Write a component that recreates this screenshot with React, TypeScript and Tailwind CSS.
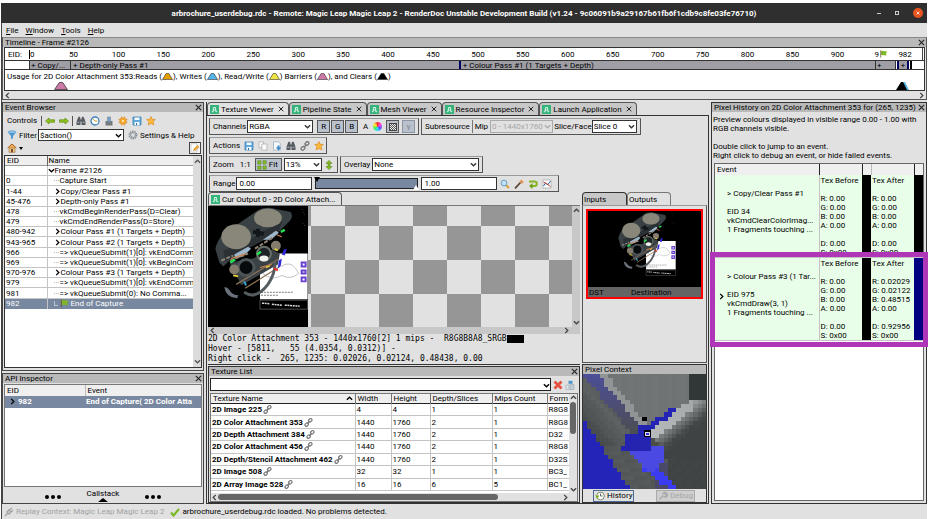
import type { ReactNode } from "react";

const ICONS: Record<string, ReactNode> = {
  left: <path d="M.5 5 4 2v1.800h5.500v2.400H4V8z" fill="#8fc31f" stroke="#5d8a10" strokeWidth=".7" />,
  right: <path d="M9.500 5 6 2v1.800H.5v2.400H6V8z" fill="#8fc31f" stroke="#5d8a10" strokeWidth=".7" />,
  find: (
    <g fill="#555b61">
      <path d="M1.500 3 2.500.8h1.500L4.500 3v6H.5V6zM8.500 3 7.500.8H6L5.500 3v6h4V6z" />
      <path d="M4 3.500h2v2H4z" />
      <path d="M1.400 6.300h2M6.600 6.300h2" stroke="#b9bec4" strokeWidth=".9" />
    </g>
  ),
  clock: (
    <g>
      <circle cx="5" cy="5" r="4" fill="#fff" stroke="#3e82bd" strokeWidth="1.300" />
      <path d="M5 5 2.800 2.800M5 5h2.300" stroke="#c99a2c" strokeWidth="1" />
    </g>
  ),
  lock: (
    <g>
      <path d="M1.500 5h7v4.500h-7z" fill="#74797e" />
      <path d="M3.500 1h3v5h-3z" fill="#6fa6d4" stroke="#7c8287" strokeWidth=".6" />
    </g>
  ),
  burst: (
    <g fill="#f4a62a" stroke="#d27b16" strokeWidth=".5">
      <path d="M3.500.8 5 2.200 6.500.8l.7 2 2 .7L7.800 5l1.400 1.500-2 .7-.7 2L5 7.800 3.500 9.200l-.7-2-2-.7L2.200 5 .8 3.500l2-.7z" />
      <circle cx="5" cy="5" r="1.200" fill="#fbe3a5" stroke="none" />
    </g>
  ),
  save: (
    <g>
      <path d="M1 1h8v8H1z" fill="#5fa9dd" stroke="#2c75ae" strokeWidth=".7" />
      <path d="M2.500 1.500h5v2.500h-5zM2.500 6h5v3h-5z" fill="#f4f8fb" />
      <path d="M4 7h1v2H4z" fill="#356e9b" />
    </g>
  ),
  star: (
    <path
      d="m5 .6 1.300 2.700 3 .2-2.200 2.100L7.900 9 5 7.400 2.100 9l.8-3.400L.7 3.500l3-.2z"
      fill="#fbb93c"
      stroke="#d98218"
      strokeWidth=".6"
    />
  ),
  funnel: (
    <g>
      <path d="M1 2.500 4 6v3.500L6 8V6l3-3.500z" fill="#4f97cf" />
      <ellipse cx="5" cy="2.200" rx="4" ry="1.400" fill="#8cc4ea" stroke="#3c81b8" strokeWidth=".5" />
    </g>
  ),
  gear: (
    <g>
      <circle cx="5" cy="5" r="3.700" fill="none" stroke="#8d9297" strokeWidth="1.600" strokeDasharray="1.500 .8" />
      <circle cx="5" cy="5" r="2.500" fill="#d9dbdd" stroke="#8a8f94" />
    </g>
  ),
  home: (
    <g>
      <path d="M.6 5 5 1l4.400 4" fill="#efb15a" stroke="#a85a1d" strokeWidth="1" />
      <path d="M2 5h6v4.300H2z" fill="#f0cf8f" stroke="#99632b" strokeWidth=".6" />
      <path d="M4 6h2v3.300H4z" fill="#7a4a24" />
    </g>
  ),
  edit: (
    <g>
      <path d="M1 .8h6V9H1z" fill="#fff" stroke="#b5b5b5" strokeWidth=".6" />
      <path d="m3.500 7.500.5-1.800L7.500 2.500 9 4 5.500 7.200z" fill="#f1b13b" stroke="#b77b1c" strokeWidth=".5" />
    </g>
  ),
  flag: (
    <g>
      <path d="M2 .8 9.500 2 8 5l1 2-7-.6z" fill="#7fb629" />
      <path d="M1.500.5v9" stroke="#6d5733" strokeWidth="1" />
    </g>
  ),
  link: (
    <g fill="none" stroke="#777" strokeWidth="1.300">
      <rect x="5" y="1" width="4" height="3" rx="1.300" transform="rotate(-45 7 2.500)" />
      <rect x="1" y="5.800" width="4" height="3" rx="1.300" transform="rotate(-45 3 7.300)" />
      <path d="m3.600 6.400 2.800-2.800" />
    </g>
  ),
  copy: (
    <g fill="#fafafa" stroke="#a4a8ac" strokeWidth=".7">
      <path d="M1 .8h4.500v6H1z" />
      <path d="M3.800 3H9v6.200H3.800z" />
    </g>
  ),
  goto: (
    <g>
      <path d="M1.500.8h5l1.800 2v6.400H1.500z" fill="#f7fafc" stroke="#8fa9bd" strokeWidth=".7" />
      <path d="M5.500 4.500h2v2h1.700L6.500 9.500l-2.700-3h1.700z" fill="#3a88c6" />
    </g>
  ),
  fit: (
    <g fill="#8dc229" stroke="#567f14" strokeWidth=".6">
      <path d="M.8.8h3.200v3.200H.8zM6 .8h3.200v3.200H6zM.8 6h3.200v3.200H.8zM6 6h3.200v3.200H6z" />
    </g>
  ),
  updown: <path d="m5 .4 3 3H6v3.200h2l-3 3-3-3h2V3.400H2z" fill="#84bb25" stroke="#568312" strokeWidth=".6" />,
  zoomIn: (
    <g>
      <path d="m6 6 3 3" stroke="#d99b33" strokeWidth="1.800" />
      <circle cx="4" cy="4" r="2.900" fill="#bfe0f5" stroke="#6ba0c4" />
    </g>
  ),
  wand: (
    <g>
      <path d="M1 9.300 6.500 3.500" stroke="#5b4634" strokeWidth="1.800" />
      <path d="m5.500 2.500 2-2 1 1.500 1.500.8-2 2z" fill="#e88f4c" />
    </g>
  ),
  back: (
    <g>
      <path d="M1 2.500h5.500a2.200 2.200 0 0 1 0 4.500H4" fill="none" stroke="#86b51f" strokeWidth="2" />
      <path d="M4.500 4v6L1 7z" fill="#6f9d14" />
    </g>
  ),
  chart: (
    <g>
      <path d="M1 1h8v8H1z" fill="#fff" stroke="#999" strokeWidth=".6" />
      <path d="m1.500 7 2-3 2 2 3-4" fill="none" stroke="#2b62a8" />
      <path d="m1.500 3 3 1.500 4 3" fill="none" stroke="#cc3c2e" />
    </g>
  ),
  cross: <path d="m1.500 1.500 7 7m0-7-7 7" stroke="#e5513f" strokeWidth="2.800" />,
  bin: (
    <g>
      <path d="M1 5h3v4.500H1z" fill="#dfe6eb" stroke="#98a5af" strokeWidth=".6" />
      <path d="M3.500.8h4v3h-4z" fill="#4d92c8" />
      <path d="M5 4.500h4v5H5z" fill="#c3ccd3" stroke="#98a5af" strokeWidth=".6" />
    </g>
  ),
  check: <path d="m1 5.500 2.500 3L9 2" fill="none" stroke="#7bb928" strokeWidth="2.200" />,
  plug: <path d="M1 9 3.500 6.500M3 5l2-2 2 2-2 2zM5 3l3-2M7 5l2-2" fill="none" stroke="#a2a2a2" strokeWidth="1.300" />,
  wrench: <path d="m1.500 8.500 4-4M5 3.500a2 2 0 0 1 3-2L7 3l1 1 1.300-1a2 2 0 0 1-3.300 2.200" fill="none" stroke="#a9a9a9" strokeWidth="1.400" />,
  history: (
    <g>
      <circle cx="5.500" cy="5" r="3.800" fill="#fff" stroke="#7d8b6a" />
      <path d="M5.500 2.500V5h2" fill="none" stroke="#444" strokeWidth=".8" />
      <path d="M.3 4.500h4L2.300 8z" fill="#79ae21" />
    </g>
  ),
  logo: (
    <g>
      <path d="M0 0h10v10H0z" fill="#36b37b" />
      <path d="M2 7.500h1.500V5M8 7.500H6.500V5M3.500 5.500h3M3.800 5V2.800h2.400V5" fill="none" stroke="#e9fff4" strokeWidth="1" />
    </g>
  ),
};

function Icon({ name, className = "size-2.5" }: { name: string; className?: string }) {
  return (
    <svg viewBox="0 0 10 10" aria-hidden="true" className={`shrink-0 ${className}`}>
      {ICONS[name]}
    </svg>
  );
}

function Chevron({ dir, className = "" }: { dir: "up" | "down" | "left" | "right"; className?: string }) {
  const d = {
    up: "M1 5.500 4 2.500l3 3",
    down: "m1 2.500 3 3 3-3",
    left: "M5.500 1 2.500 4l3 3",
    right: "m2.500 1 3 3-3 3",
  }[dir];
  return (
    <svg viewBox="0 0 8 8" aria-hidden="true" className={`size-[7px] shrink-0 ${className}`}>
      <path d={d} fill="none" stroke="currentColor" strokeWidth="1.500" />
    </svg>
  );
}

function Close() {
  return (
    <button type="button" aria-label="Close" className="flex size-2 shrink-0 items-center justify-center">
      <svg viewBox="0 0 8 8" className="size-[7px]">
        <path d="m1 1 6 6m0-6L1 7" stroke="#222" strokeWidth="1.300" />
      </svg>
    </button>
  );
}

function PanelTitle({ children, closable = true }: { children: ReactNode; closable?: boolean }) {
  return (
    <div className="flex h-[9px] shrink-0 items-center justify-between whitespace-nowrap bg-[#b9b9b9] pr-px pl-0.5">
      <h2>{children}</h2>
      {closable && <Close />}
    </div>
  );
}

function Select({
  label,
  value,
  className = "",
  disabled = false,
}: {
  label: string;
  value: string;
  className?: string;
  disabled?: boolean;
}) {
  return (
    <div className={`relative flex ${className}`}>
      <select
        aria-label={label}
        disabled={disabled}
        className={`h-[13px] w-full appearance-none border pr-2 pl-px ${
          disabled ? "border-[#aaa] bg-[#e1e1e1] text-[#a5a5a5]" : "border-[#333] bg-white text-black"
        }`}
      >
        <option>{value}</option>
      </select>
      <Chevron dir="down" className={`absolute top-[3px] right-0.5 ${disabled ? "text-[#aaa]" : "text-[#333]"}`} />
    </div>
  );
}

function Toolbar({ label, children, className = "" }: { label: string; children: ReactNode; className?: string }) {
  return (
    <div
      role="toolbar"
      aria-label={label}
      className={`flex h-[17px] items-center border border-[#555] border-t-[#999] px-[3px] ${className}`}
    >
      {children}
    </div>
  );
}

function IconButton({ name, label, className = "" }: { name: string; label: string; className?: string }) {
  return (
    <button type="button" aria-label={label} className={`flex shrink-0 items-center ${className}`}>
      <Icon name={name} />
    </button>
  );
}

function Triangle({ fill, className = "h-[7px] w-[11px]" }: { fill: string; className?: string }) {
  return (
    <svg viewBox="0 0 12 8" aria-hidden="true" preserveAspectRatio="none" className={`inline-block ${className}`}>
      <path d="M4.500 .5h3L11.500 7.500H.5z" fill={fill} stroke="#333" strokeWidth=".7" />
    </svg>
  );
}

const TICKS = Array.from({ length: 18 }, (_, i) => (i + 1) * 50);

function Timeline() {
  return (
    <section aria-label="Timeline" className="flex flex-col border border-[#555] border-t-[#888]">
      <PanelTitle>Timeline - Frame #2126</PanelTitle>
      <div className="mx-px border border-[#333] bg-white">
        <div className="flex h-3 items-center">
          <span className="w-6 pl-[3px]">EID:</span>
          <span className="w-[22px] border-l border-black">0</span>
          {TICKS.map((t) => (
            <span key={t} className="flex-1 text-center">
              {t}
            </span>
          ))}
          <span className="flex w-[28px] items-center justify-end">
            9<Icon name="flag" className="h-2 w-[9px]" />
          </span>
          <span className="mr-2.5 w-6 text-right">982</span>
          <span className="h-full w-0.5 border-l border-[#444]" />
        </div>
        <div className="flex h-2.5 items-center whitespace-nowrap border-y border-[#333]">
          <span className="w-6" />
          <span className="flex h-full w-[41px] items-center border-l border-[#333] bg-[#9f9ea5] pl-px">+ Copy/...</span>
          <span className="flex h-full flex-[390] items-center border-l border-[#333] bg-[#9f9ea5] pl-0.5">
            + Depth-only Pass #1
          </span>
          <span className="flex h-full flex-[417] items-center border-l-2 border-[#000060] bg-[#9f9ea5] pl-0.5">
            + Colour Pass #1 (1 Targets + Depth)
          </span>
          <span className="flex h-full w-[21px] items-center border-x border-[#333] bg-[#9f9ea5] pl-px">+</span>
          <span className="ml-px flex h-full w-3 items-center justify-center border-x-2 border-[#000060] bg-[#9f9ea5]">+</span>
          <span className="ml-px mr-3 h-full w-0.5 bg-black" />
        </div>
        <div className="flex h-3 items-center whitespace-nowrap pl-0.5">
          Usage for 2D Color Attachment 353:Reads (<Triangle fill="#e69f00" />
          ), Writes (<Triangle fill="#56b4e9" />
          ), Read/Write (<Triangle fill="#f0e442" />
          <span className="whitespace-pre">{") Barriers ("}</span>
          <Triangle fill="#cc79a7" />
          ), and Clears (<Triangle fill="#000" />)
        </div>
        <div className="flex h-2 items-start justify-between pr-3.5 pl-[49px]">
          <Triangle fill="#cc79a7" className="h-2 w-3.5" />
          <svg viewBox="0 0 14 8" className="h-2 w-3.5" aria-hidden="true">
            <path d="M6 0h3l4 8H6z" fill="#56b4e9" />
            <path d="M5 0h2l4 8H0z" />
          </svg>
        </div>
      </div>
      <div className="flex h-2 items-center justify-between px-px text-[#444]">
        <Chevron dir="left" />
        <Chevron dir="right" />
      </div>
    </section>
  );
}

type EventRow = { eid: string; name: string; kind?: "root" | "branch" | "end" };

const EVENTS: EventRow[] = [
  { eid: "", name: "Frame #2126", kind: "root" },
  { eid: "0", name: "Capture Start" },
  { eid: "1-44", name: "Copy/Clear Pass #1", kind: "branch" },
  { eid: "45-476", name: "Depth-only Pass #1", kind: "branch" },
  { eid: "478", name: "vkCmdBeginRenderPass(D=Clear)" },
  { eid: "479", name: "vkCmdEndRenderPass(D=Store)" },
  { eid: "480-942", name: "Colour Pass #1 (1 Targets + Depth)", kind: "branch" },
  { eid: "943-965", name: "Colour Pass #2 (1 Targets + Depth)", kind: "branch" },
  { eid: "966", name: "=> vkQueueSubmit(1)[0]: vkEndComm" },
  { eid: "969", name: "=> vkQueueSubmit(1)[0]: vkBeginCom" },
  { eid: "970-976", name: "Colour Pass #3 (1 Targets + Depth)", kind: "branch" },
  { eid: "979", name: "=> vkQueueSubmit(1)[0]: vkEndComm" },
  { eid: "981", name: "=> vkQueueSubmit(0): No Comma..." },
  { eid: "982", name: "End of Capture", kind: "end" },
];

function EventBrowser() {
  return (
    <section aria-label="Event Browser" className="flex flex-[268] flex-col border border-[#444]">
      <PanelTitle>Event Browser</PanelTitle>
      <div className="flex h-[17px] items-center pl-1">
        <span>Controls</span>
        <div className="ml-1 flex items-center gap-1 border-x border-[#555] px-[3px]">
          <IconButton name="left" label="Previous event" />
          <IconButton name="right" label="Next event" />
        </div>
        <div className="ml-[3px] flex items-center gap-1">
          <IconButton name="find" label="Find" />
          <IconButton name="clock" label="Time durations" />
          <IconButton name="lock" label="Select columns" />
          <IconButton name="burst" label="Statistics" />
          <IconButton name="save" label="Export" />
          <IconButton name="star" label="Bookmark" />
        </div>
      </div>
      <div className="flex h-3 items-center pl-1 whitespace-nowrap">
        <Icon name="funnel" />
        <label htmlFor="filter" className="ml-0.5">
          Filter
        </label>
        <div className="relative ml-px flex">
          <input id="filter" defaultValue="$action()" className="h-3 w-[86px] border border-[#333] bg-white pl-px" />
          <Chevron dir="down" className="absolute top-[3px] right-0.5" />
        </div>
        <button type="button" className="ml-1 flex items-center gap-0.5">
          <Icon name="gear" />
          Settings &amp; Help
        </button>
      </div>
      <div className="flex h-3.5 items-center pl-1">
        <IconButton name="home" label="Home" />
        <span className="ml-0.5 border-x-2 border-t-[3px] border-x-transparent border-t-black" />
        <button type="button" aria-label="Edit" className="mr-0.5 ml-auto flex size-3 items-center justify-center border border-[#444] bg-[#f4f4f4]">
          <Icon name="edit" />
        </button>
      </div>
      <div className="mx-px mb-0.5 flex flex-1 border border-[#333] bg-white">
        <div className="min-w-0 flex-1">
          <table className="h-[153px] w-full table-fixed border-collapse whitespace-nowrap text-left">
            <thead>
              <tr className="border-b border-[#999] bg-[#efefef]">
                <th className="w-[42px] border-r border-[#666] p-0 pl-0.5 font-normal">EID</th>
                <th className="p-0 pl-px font-normal">Name</th>
              </tr>
            </thead>
            <tbody>
              {EVENTS.map((e) => (
                <tr
                  key={e.eid + e.name}
                  className={`border-b ${e.kind === "end" ? "border-[#7888a0] bg-[#7888a0] text-white" : "border-[#c4c4c4]"}`}
                >
                  <td className="border-r border-[#c4c4c4] p-0 pl-px">{e.eid}</td>
                  <td className="overflow-hidden p-0">
                    <div className={`flex items-center ${e.kind === "root" ? "" : "pl-1.5"}`}>
                      {e.kind === "root" && <Chevron dir="down" />}
                      {e.kind === "branch" && <Chevron dir="right" />}
                      {e.kind === "end" && (
                        <>
                          <span className="mr-0.5 h-[5px] w-1 shrink-0 border-b border-l border-[#b9c2cf]" />
                          <Icon name="flag" className="mr-0.5 size-[9px]" />
                        </>
                      )}
                      {!e.kind && <span className="mr-px w-[5px] shrink-0 border-t border-dotted border-[#bbb]" />}
                      <span>{e.name}</span>
                    </div>
                  </td>
                </tr>
              ))}
            </tbody>
          </table>
        </div>
        <div className="flex w-2 flex-col items-center justify-between bg-[#dcdcdc] py-0.5 text-[#555]">
          <Chevron dir="up" />
          <Chevron dir="down" />
        </div>
      </div>
    </section>
  );
}

function ApiInspector() {
  return (
    <section aria-label="API Inspector" className="flex flex-[130] flex-col border border-[#444]">
      <PanelTitle>API Inspector</PanelTitle>
      <div className="mx-px mt-px flex-1 border border-[#777] bg-white">
        <table className="w-full table-fixed whitespace-nowrap text-left">
          <thead className="bg-[#efefef]">
            <tr className="h-[11px]">
              <th className="w-20 border-r border-[#bbb] p-0 pl-0.5 font-normal">EID</th>
              <th className="p-0 pl-0.5 font-normal">Event</th>
            </tr>
          </thead>
          <tbody>
            <tr className="h-3 bg-[#7888a0] font-bold text-white">
              <td className="p-0">
                <div className="flex items-center gap-0.5 pl-1">
                  <Chevron dir="right" className="text-black" />
                  982
                </div>
              </td>
              <td className="overflow-hidden p-0 pl-px">End of Capture( 2D Color Atta</td>
            </tr>
          </tbody>
        </table>
      </div>
      <div className="flex h-4 shrink-0 items-center justify-center gap-[26px]">
        <span className="flex gap-0.5 pt-1">
          {[0, 1, 2].map((i) => (
            <span key={i} className="size-1 rounded-full bg-black" />
          ))}
        </span>
        <button type="button" className="flex flex-col items-center leading-[9px]">
          Callstack
          <span className="border-x-[5px] border-b-4 border-x-transparent border-b-black" />
        </button>
        <span className="flex gap-0.5 pt-1">
          {[0, 1, 2].map((i) => (
            <span key={i} className="size-1 rounded-full bg-black" />
          ))}
        </span>
      </div>
    </section>
  );
}

function Headset() {
  return (
    <g>
      <path d="M52 48h48v46H52z" fill="#fff" />
      <path d="M52 95h48v9H52z" fill="#000" stroke="#999" strokeWidth=".5" />
      <path d="m54 98 8 .5M64 99l10 1M77 100l15 1" stroke="#ddd" strokeWidth="1.500" strokeDasharray="2 .7" />
      <path d="M53 87h33M53 90h17" stroke="#555" strokeWidth=".8" strokeDasharray="2 1" />
      <path d="M55 68q8-14 18-7 9-6 15 2l3 5q-8 7-17 2-10 6-19-2z" fill="none" stroke="#999" strokeWidth=".6" />
      <path d="M93 56h6v6h-6zM93 64h6v5h-6zM93 71h6v6h-6z" fill="#6a3fd0" />
      <path d="M95 58h2v2h-2zM95 66h2v1h-2zM95 73h2v2h-2z" fill="#fff" />
      <path d="M94 3l3 6M95 17l3 4" stroke="#444" strokeWidth="1" strokeDasharray="1 2" />
      <path d="M16 82q3-1 6 4 3 4 8 4l-1 3q-11 0-13-11z" fill="#6b727c" />
      <path d="M7 43Q9 35 14 29L46 7Q55-1 68 3L83 6q3 5-1 9L70 27 30 48q-8 6-15 13l-4-4z" fill="#3a4145" />
      <path d="m15 45 30-13 30-18-4 11-41 24-13 7z" fill="#2a3034" />
      <path d="m26 49 14-8 3 2-8 8-8 2zM55 34l13-9 3 2-8 7z" fill="#9eb6ca" />
      <path d="m13 55 12-5M22 55l18-7M47 43l19-12" stroke="#8b8479" strokeWidth="2" strokeDasharray="4 1.500" />
      <ellipse cx="28" cy="31" rx="15" ry="12.500" fill="#88877a" />
      <ellipse cx="60" cy="12" rx="14" ry="9.500" fill="#88877a" />
      <path d="M45 26l11 2M50 23v8" stroke="#11171a" strokeWidth="4" />
      <path d="M22 57q0 9 7 14l4 9 37-21 2-11-8-4-19 9z" fill="#3a4246" />
      <path d="m28 79 42-25M37 83 72 61" stroke="#8f7357" strokeWidth="1.300" />
      <path d="M36 87q12 8 24-8 8-12 7-23" fill="none" stroke="#555c60" strokeWidth="3" />
      <circle cx="38" cy="62" r="8" fill="#080b0d" stroke="#4c5458" strokeWidth="3" />
      <circle cx="56" cy="48" r="7" fill="#1d2326" stroke="#697069" strokeWidth="2" />
      <ellipse cx="56" cy="53" rx="4.500" ry="3" fill="#f3f3ee" />
      <circle cx="26" cy="64" r="5" fill="#847b6c" />
      <circle cx="68" cy="40" r="5" fill="#847b6c" />
      <path d="m70 63 1-8 3-2-1 7zM74 49l2-5 3-1-2 7z" fill="#3028dc" />
      <path d="m22 57 5-3M73 26l4-2M49 49l4-3" stroke="#25e052" strokeWidth="2.500" />
      <path d="m25 70 5 1M67 43l3 2M58 62l4-2" stroke="#e5d33a" strokeWidth="1.800" />
      <path d="m52 62 12-3M23 53l15-5M69 29l5 2" stroke="#cf8550" strokeWidth="1.200" />
      <path d="m66 63 4 2" stroke="#ef2d2d" strokeWidth="2" />
      <path d="m36 76 2 4" stroke="#39a6cf" strokeWidth="2" />
    </g>
  );
}

/* Colour of one magnified texel in the pixel context view. */
function texel(c: number, r: number): string {
  const grey = (v: number, b = 0) => `rgb(${Math.round(v)},${Math.round(v + 3)},${Math.round(v + 4 + b)})`;
  const ridge = 4.2 + r * 0.83;
  const white = 27 - (r - 5) * 1.28;
  if (c === 14 && r === 10) return "#000";
  if (c < (r - 10.5) * 0.66) return "#2424b9";
  if (r < 15 && r > 7 && c >= white - 3.600 && c < white - 1.500 && c < 22) return "#2323b4";
  if (r >= 12 && r <= 17 && c >= 22.500 - r * 0.8 && c <= 15 && c > 8.500) return "#2424b0";
  if (r >= 14 && r <= 17 && c >= 10 && c <= 14) return "#2424b0";
  if (r >= 17 && r <= 22 && c >= 9 + (r - 17) * 1.2 && c <= 18 - Math.max(0, r - 20)) return "#4a4ae2";
  if (r > 21 && c >= 14 + (r - 22) * 1.3 && c <= 17 + (r - 22) * 1.1) return "#3b3bf2";
  if (r < 13 && Math.abs(c - ridge) < 1) return grey(145);
  if (c > ridge && c < white - 1.500 && r < 14) return c > 24 && r < 6 ? "#303736" : grey(112 + (c % 3));
  if (c < ridge && r < 17) {
    const d = ridge - c;
    if (d < 4.500) return `rgb(76,78,${Math.round(150 - r * 5)})`;
    return grey(92 - Math.abs(6 - d) * 3 + ((c * 7 + r * 3) % 5));
  }
  if (r < 20 && c > 14) {
    if (c > 24 && r < 6) return "#303736";
    const d = c - white;
    if (d < 2 && c < 26) return grey(185 - c + r);
    if (d < 7) return grey(155 - d * 13);
    return grey(Math.max(64, 98 - d * 4));
  }
  if (c < 20 && c > 16 && r > 20) return "#4a4a68";
  return c < 20 ? grey(82 + ((c + r * 3) % 7)) : grey(64 + ((c + r) % 3));
}

function PixelGrid() {
  const cells: ReactNode[] = [];
  for (let r = 0; r < 27; r++) {
    for (let c = 0; c < 29; c++) {
      cells.push(<rect key={`${c}-${r}`} x={c} y={r} width="1.050" height="1.050" fill={texel(c, r)} />);
    }
  }
  return (
    <svg viewBox="0 0 29 27" preserveAspectRatio="none" shapeRendering="crispEdges" className="h-[112px] w-full flex-1">
      {cells}
      <rect x="14.600" y="13.400" width="1.200" height="1.300" fill="#3030d0" stroke="#000" strokeWidth=".3" />
      <rect x="14.800" y="13.700" width=".8" height=".8" fill="none" stroke="#fff" strokeWidth=".2" />
    </svg>
  );
}

const TABS = ["Texture Viewer", "Pipeline State", "Mesh Viewer", "Resource Inspector", "Launch Application"];

function Tab({ children, active = false, closable = true }: { children: ReactNode; active?: boolean; closable?: boolean }) {
  return (
    <button
      type="button"
      role="tab"
      aria-selected={active}
      className={`flex h-[13px] items-center gap-0.5 rounded-t border border-b-0 border-[#555] px-0.5 whitespace-nowrap ${
        active ? "bg-[#e1e1e1]" : "bg-[#c8c8c8]"
      }`}
    >
      <Icon name="logo" className="size-[9px]" />
      {children}
      {closable && (
        <svg viewBox="0 0 8 8" className="mx-0.5 size-1.5" aria-hidden="true">
          <path d="m1 1 6 6m0-6L1 7" stroke="#222" strokeWidth="1.300" />
        </svg>
      )}
    </button>
  );
}

function Toolbars() {
  const toggle = "h-[13px] w-[13px] border border-[#555] bg-[#b9c1cd]";
  return (
    <div className="flex flex-col gap-0.5 px-0.5 pt-0.5 whitespace-nowrap">
      <div className="flex gap-0.5">
        <Toolbar label="Channels" className="w-[210px]">
          <span>Channels</span>
          <Select label="Channels" value="RGBA" className="ml-px w-[66px]" />
          <div className="ml-1 flex gap-px">
            <button type="button" className={toggle}>R</button>
            <button type="button" className={toggle}>G</button>
            <button type="button" className={toggle}>B</button>
            <button type="button" className="h-[13px] w-[13px]">A</button>
          </div>
          <span className="ml-px size-[9px] rounded-full bg-[conic-gradient(#f33,#f4e,#55f,#3df,#4e5,#fe3,#f33)]" />
          <button type="button" aria-label="Checkerboard" className="ml-1 flex h-[13px] w-[13px] items-center justify-center border border-[#555] bg-[#b9c1cd]">
            <span className="size-2 border border-[#444] bg-[repeating-conic-gradient(#555_0_25%,#eee_0_50%)] bg-[length:2px_2px]" />
          </button>
          <button type="button" className="ml-auto h-[13px] w-[13px] border border-[#8b95a5] bg-[#b9c1cd] text-[#7d8794]">γ</button>
        </Toolbar>
        <Toolbar label="Subresource" className="w-[220px]">
          <span>Subresource</span>
          <span className="mx-0.5 h-[13px] w-px bg-[#777]" />
          <span>Mip</span>
          <Select label="Mip" value="0 - 1440x1760" className="ml-0.5 w-16" disabled />
          <span className="ml-px">Slice/Face</span>
          <Select label="Slice/Face" value="Slice 0" className="ml-auto w-[46px]" />
        </Toolbar>
      </div>
      <Toolbar label="Actions" className="w-[118px]">
        <span>Actions</span>
        <div className="ml-1 flex gap-1">
          <IconButton name="save" label="Save texture" />
          <IconButton name="copy" label="Copy" />
          <IconButton name="goto" label="Go to" />
          <IconButton name="find" label="Find" />
          <IconButton name="link" label="Link" />
          <IconButton name="star" label="Bookmark" />
        </div>
      </Toolbar>
      <div className="flex gap-0.5">
        <Toolbar label="Zoom" className="w-[129px]">
          <span>Zoom</span>
          <button type="button" className="ml-1.5">1:1</button>
          <button type="button" className="ml-1 flex h-[13px] w-[27px] items-center gap-0.5 border border-[#555] bg-[#b9c1cd] px-px">
            <Icon name="fit" />
            Fit
          </button>
          <Select label="Zoom" value="13%" className="ml-0.5 w-[38px]" />
          <IconButton name="updown" label="Flip" className="ml-0.5" />
        </Toolbar>
        <Toolbar label="Overlay" className="w-[143px]">
          <span>Overlay</span>
          <Select label="Overlay" value="None" className="ml-0.5 flex-1" />
        </Toolbar>
      </div>
      <Toolbar label="Range" className="w-[350px]">
        <label htmlFor="range-min">Range</label>
        <input id="range-min" defaultValue="0.00" className="ml-px h-[13px] w-[76px] border border-[#333] bg-white pl-0.5" />
        <div className="relative ml-[3px] h-[11px] w-[103px] border border-[#222] bg-[#7888a0]">
          <span className="absolute -top-0.5 -left-0.5 border-x-[3px] border-t-[5px] border-x-transparent border-t-black" />
          <span className="absolute -right-0.5 -bottom-0.5 border-x-[3px] border-b-[5px] border-x-transparent border-b-white" />
        </div>
        <input aria-label="Range maximum" defaultValue="1.00" className="ml-[3px] h-[13px] w-[76px] border border-[#333] bg-white pl-0.5" />
        <div className="ml-[3px] flex gap-1">
          <IconButton name="zoomIn" label="Zoom in" />
          <IconButton name="wand" label="Autofit" />
          <IconButton name="back" label="Reset" />
          <IconButton name="chart" label="Histogram" />
        </div>
      </Toolbar>
    </div>
  );
}

const TEXTURES = [
  ["2D Image 225", "4", "4", "1", "1", "R8G8"],
  ["2D Color Attachment 353", "1440", "1760", "2", "1", "R8G8"],
  ["2D Depth Attachment 384", "1440", "1760", "2", "1", "D32"],
  ["2D Color Attachment 456", "1440", "1760", "2", "1", "R8G8"],
  ["2D Depth/Stencil Attachment 462", "1440", "1760", "2", "1", "D32S"],
  ["2D Image 508", "32", "32", "1", "1", "BC3_"],
  ["2D Array Image 528", "16", "16", "6", "5", "BC1_"],
];

function TextureList() {
  const th = "border-r border-[#777] p-0 pl-0.5 font-normal";
  return (
    <section aria-label="Texture List" className="flex flex-1 flex-col border border-[#333]">
      <PanelTitle>Texture List</PanelTitle>
      <div className="flex items-center gap-0.5 py-0.5 pr-1 pl-px">
        <div className="relative flex flex-1">
          <input aria-label="Filter textures" className="h-[13px] w-full border border-[#222] bg-white" />
          <Chevron dir="down" className="absolute top-1 right-px" />
        </div>
        <IconButton name="cross" label="Clear" />
        <IconButton name="bin" label="Delete" />
      </div>
      <div className="mx-px flex flex-1 flex-col border border-[#777] bg-white">
        <div className="flex flex-1">
          <table className="h-[97px] w-full flex-1 table-fixed border-collapse self-start whitespace-nowrap text-left">
            <thead>
              <tr className="border-b border-[#222] bg-[#efefef]">
                <th className={th}>
                  <div className="flex items-center justify-between pr-0.5">
                    Texture Name
                    <Chevron dir="up" />
                  </div>
                </th>
                <th className={`w-9 ${th}`}>Width</th>
                <th className={`w-[39px] ${th}`}>Height</th>
                <th className={`w-[62px] ${th}`}>Depth/Slices</th>
                <th className={`w-[55px] ${th}`}>Mips Count</th>
                <th className="w-[22px] overflow-hidden p-0 pl-0.5 font-normal">Form</th>
              </tr>
            </thead>
            <tbody>
              {TEXTURES.map((t) => (
                <tr key={t[0]} className="border-b border-[#c4c4c4]">
                  {t.map((v, i) => (
                    <td key={i} className="overflow-hidden border-r border-[#c4c4c4] p-0 pl-px last:border-r-0">
                      {i === 0 ? (
                        <span className="flex items-center gap-px font-bold">
                          {v}
                          <Icon name="link" className="size-[9px]" />
                        </span>
                      ) : (
                        v
                      )}
                    </td>
                  ))}
                </tr>
              ))}
            </tbody>
          </table>
          <div className="flex w-2 flex-col items-center bg-[#e1e1e1] text-[#444]">
            <Chevron dir="up" />
            <span className="my-px h-8 w-1.5 rounded-sm bg-[#666]" />
            <Chevron dir="down" className="mt-auto" />
          </div>
        </div>
        <div className="flex h-2 items-center bg-[#e1e1e1] pr-2 text-[#444]">
          <Chevron dir="left" />
          <span className="h-1.5 w-[280px] rounded-sm bg-[#666]" />
          <Chevron dir="right" className="ml-auto" />
        </div>
      </div>
    </section>
  );
}

function TextureView() {
  return (
    <section aria-label="Current output" className="flex flex-col border-b border-[#333]">
      <div className="flex" role="tablist">
        <Tab active closable={false}>
          <span className="pr-1">Cur Output 0 - 2D Color Attach...</span>
        </Tab>
      </div>
      <div className="flex h-[122px] border-t border-[#777]">
        <svg viewBox="0 0 100 122" className="h-full w-[100px] shrink-0 bg-black" role="img" aria-label="Colour attachment preview">
          <Headset />
        </svg>
        <div className="flex-1 bg-[repeating-conic-gradient(#e1e1e1_0_25%,#969696_0_50%)] bg-[length:68px_68px] bg-[position:37px_-14px]" />
        <div className="flex w-2 flex-col items-center justify-between bg-[#c8c8c8] py-px text-[#444]">
          <Chevron dir="up" />
          <Chevron dir="down" />
        </div>
      </div>
      <div className="flex h-[7px] items-center justify-between bg-[#c8c8c8] pr-2.5 pl-px text-[#444]">
        <Chevron dir="left" />
        <Chevron dir="right" />
      </div>
      <div className="font-['DejaVu_Sans_Mono',monospace] leading-[10px] whitespace-pre">
        <p className="flex items-center">
          {"2D Color Attachment 353 - 1440x1760[2] 1 mips -  R8G8B8A8_SRGB"}
          <span className="h-2 w-[17px] bg-black" />
        </p>
        <p>{"Hover - [5811,   55 (4.0354, 0.0312)] -"}</p>
        <p>{"Right click -  265, 1235: 0.02026, 0.02124, 0.48438, 0.00"}</p>
      </div>
    </section>
  );
}

function Outputs() {
  return (
    <section aria-label="Outputs" className="flex h-[171px] flex-col">
      <div className="flex" role="tablist">
        <button type="button" role="tab" aria-selected="false" className="h-[13px] w-[45px] rounded-t border border-b-0 border-[#333] bg-[#c8c8c8] pl-px text-left">
          Inputs
        </button>
        <button type="button" role="tab" aria-selected="true" className="h-[13px] w-11 rounded-t border border-b-0 border-[#777] pl-px text-left">
          Outputs
        </button>
      </div>
      <div className="flex-1 border border-[#555] border-t-[#999] px-[3px] pt-[3px]">
        <figure className="border-2 border-[#f00] bg-black">
          <svg viewBox="-42 0 183 122" className="h-[76px] w-full" role="img" aria-label="Output thumbnail">
            <Headset />
          </svg>
          <figcaption className="flex h-2.5 items-center bg-[#646464] pl-px">
            <span className="w-[42px]">DST</span>
            <span>Destination</span>
          </figcaption>
        </figure>
      </div>
    </section>
  );
}

function PixelContext() {
  return (
    <section aria-label="Pixel Context" className="flex flex-1 flex-col border border-[#333]">
      <PanelTitle closable={false}>Pixel Context</PanelTitle>
      <PixelGrid />
      <div className="flex h-[13px] items-center justify-between pr-[11px] pl-2.5">
        <button type="button" className="flex h-3 items-center gap-0.5 border border-[#4c6a96] px-px">
          <Icon name="history" />
          History
        </button>
        <button type="button" disabled className="flex h-3 w-[39px] items-center gap-0.5 border border-[#aaa] bg-[#cfcfcf] px-px text-[#a5a5a5]">
          <Icon name="wrench" />
          Debug
        </button>
      </div>
    </section>
  );
}

type HistoryRow = { title: string; eid: string; call: string; after: string[]; swatch: string; expandable?: boolean };

const HISTORY: HistoryRow[] = [
  {
    title: "> Copy/Clear Pass #1",
    eid: "EID 34",
    call: "vkCmdClearColorImag...",
    after: ["R: 0.00", "G: 0.00", "B: 0.00", "A: 0.00", "", "D: 0.00", "S: 0x00"],
    swatch: "bg-black",
  },
  {
    title: "> Colour Pass #3 (1 Tar...",
    eid: "EID 975",
    call: "vkCmdDraw(3, 1)",
    after: ["R: 0.02029", "G: 0.02122", "B: 0.48515", "A: 0.00", "", "D: 0.92956", "S: 0x00"],
    swatch: "bg-[#000080]",
    expandable: true,
  },
];

const BEFORE = ["R: 0.00", "G: 0.00", "B: 0.00", "A: 0.00", "", "D: 0.00", "S: 0x00"];

function Values({ heading, values }: { heading: string; values: string[] }) {
  return (
    <td className="p-0 pl-px align-top">
      <p className="mb-[9px] pt-px">{heading}</p>
      {values.map((v, i) => (
        <p key={i} className="h-[9px]">
          {v}
        </p>
      ))}
    </td>
  );
}

function PixelHistory() {
  return (
    <section aria-label="Pixel History" className="relative flex w-[216px] shrink-0 flex-col border border-[#333]">
      <PanelTitle>Pixel History on 2D Color Attachment 353 for (265, 1235)</PanelTitle>
      <div className="px-px pt-[3px] pb-[3px] whitespace-nowrap">
        <p>Preview colours displayed in visible range 0.00 - 1.00 with</p>
        <p className="pb-[9px]">RGB channels visible.</p>
        <p>Double click to jump to an event.</p>
        <p>Right click to debug an event, or hide failed events.</p>
      </div>
      <div className="mx-0.5 mb-0.5 flex-1 border border-[#666] bg-white">
        <table className="w-full table-fixed whitespace-nowrap text-left">
          <thead className="bg-[#efefef]">
            <tr className="h-[11px]">
              <th className="border-r border-[#222] p-0 pl-0.5 font-normal">Event</th>
              <th className="w-[43px] border-r border-[#222] p-0" />
              <th className="w-[9px] border-r border-[#bbb] p-0" />
              <th className="w-[43px] border-r border-[#222] p-0" />
              <th className="w-[9px] p-0" />
            </tr>
          </thead>
          <tbody>
            {HISTORY.map((h) => (
              <tr key={h.eid} className="h-[82px] border-b border-[#c4c4c4] bg-[#e9fee9]">
                <td className="overflow-hidden border-r border-[#c4c4c4] p-0 align-top">
                  <div className="flex items-center pt-[14px]">
                    <span className="flex w-3 justify-center pt-1">{h.expandable && <Chevron dir="right" />}</span>
                    <div>
                      <p className="pb-[9px]">{h.title}</p>
                      <p>{h.eid}</p>
                      <p>{h.call}</p>
                      <p>1 Fragments touching ...</p>
                    </div>
                  </div>
                </td>
                <Values heading="Tex Before" values={BEFORE} />
                <td className="bg-black p-0" />
                <Values heading="Tex After" values={h.after} />
                <td className={`p-0 ${h.swatch}`} />
              </tr>
            ))}
          </tbody>
        </table>
      </div>
      <div className="pointer-events-none absolute top-[149px] -right-0.5 -left-0.5 h-[95px] border-[5px] border-[#b036b8]" />
    </section>
  );
}

export default function App() {
  return (
    <div className="flex min-h-screen flex-col bg-white pt-[3px] pr-[3px] pl-px font-[Roboto,sans-serif] text-[8px] leading-[9px] text-black">
      <header className="flex h-5 items-center bg-[#302f30] text-white">
        <h1 className="flex-1 pl-[74px] text-center font-bold whitespace-nowrap">
          arbrochure_userdebug.rdc - Remote: Magic Leap Magic Leap 2 - RenderDoc Unstable Development Build (v1.24 -
          9c06091b9a29167b61fb6f1cdb9c8fe03fe76710)
        </h1>
        <div className="flex w-[74px] items-center justify-end gap-3.5 pr-1">
          <button type="button" aria-label="Minimise" className="h-px w-1 bg-[#ccc]" />
          <button type="button" aria-label="Maximise" className="size-1 border border-[#ccc]" />
          <button type="button" aria-label="Close window" className="flex size-2.5 items-center justify-center rounded-full bg-[#e95420]">
            <svg viewBox="0 0 8 8" className="size-1.5">
              <path d="m2 2 4 4m0-4L2 6" stroke="#fff" strokeWidth="1" />
            </svg>
          </button>
        </div>
      </header>
      <div className="flex flex-1 flex-col border-l border-[#444] bg-[#e1e1e1]">
        <nav className="flex h-3.5 items-center gap-[7px] pl-1">
          {["File", "Window", "Tools", "Help"].map((m) => (
            <button key={m} type="button">
              <span className="underline">{m[0]}</span>
              {m.slice(1)}
            </button>
          ))}
        </nav>
        <Timeline />
        <main className="flex flex-1 gap-0.5 pt-0.5">
          <div className="flex w-[202px] shrink-0 flex-col gap-0.5">
            <EventBrowser />
            <ApiInspector />
          </div>
          <div className="flex min-w-0 flex-1 flex-col border-l border-[#333]">
            <div className="flex" role="tablist">
              {TABS.map((t, i) => (
                <Tab key={t} active={i === 0}>
                  {t}
                </Tab>
              ))}
            </div>
            <div className="flex flex-1 flex-col border-t border-r border-b border-[#333]">
              <Toolbars />
              <div className="flex flex-1 gap-0.5 px-px">
                <div className="flex min-w-0 flex-1 flex-col gap-px">
                  <TextureView />
                  <TextureList />
                </div>
                <div className="flex w-[125px] shrink-0 flex-col gap-px">
                  <Outputs />
                  <PixelContext />
                </div>
              </div>
            </div>
          </div>
          <PixelHistory />
        </main>
        <footer className="flex h-[15px] items-center gap-0.5 pl-0.5">
          <Icon name="plug" />
          <span className="text-[#a2a2a2]">Replay Context: Magic Leap Magic Leap 2</span>
          <Icon name="check" className="ml-1 size-2.5" />
          <span>arbrochure_userdebug.rdc loaded. No problems detected.</span>
        </footer>
      </div>
    </div>
  );
}
